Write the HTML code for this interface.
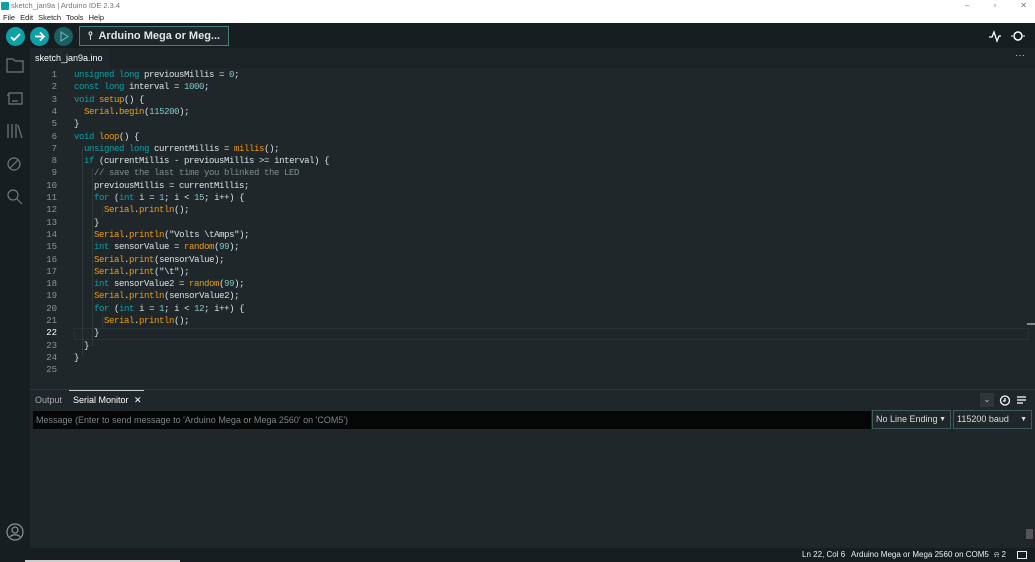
<!DOCTYPE html>
<html><head><meta charset="utf-8"><style>
*{margin:0;padding:0;box-sizing:border-box}
body{width:1035px;height:562px;overflow:hidden;background:#1f272a;font-family:"Liberation Sans",sans-serif;position:relative}
.abs{position:absolute}
.title{left:0;top:0;width:1035px;height:12px;background:#fff;font-size:7.5px;color:#777;line-height:12px;padding-left:11px}
.menu{left:0;top:12px;width:1035px;height:11px;background:#fff;font-size:7.5px;color:#222;line-height:11px;padding-left:3px;word-spacing:3px}
.tb{left:0;top:23px;width:1035px;height:25px;background:#171e21}
.side{left:0;top:48px;width:30px;height:500px;background:#171e21}
.btn{width:19px;height:19px;border-radius:50%;top:27px}
.code{left:30px;top:68px;font-family:"Liberation Mono",monospace;font-size:9px;letter-spacing:-0.4px;color:#dae3e3}
.ln{position:absolute;left:0;width:27px;text-align:right;color:#8a9596;letter-spacing:0}
.cl{position:absolute;left:44px;white-space:pre}
.k{color:#0ca1a6}.f{color:#f39c12}.n{color:#7fcbcd}.c{color:#7f8c8d}.s{color:#dae3e3}
.g{position:absolute;width:1px;background:#2f393c}
</style></head><body>
<div class="abs title"><span style="position:absolute;left:1px;top:2px;width:8px;height:8px;background:#0ca1a6;border-radius:1px"></span>sketch_jan9a | Arduino IDE 2.3.4</div>
<div class="abs" style="right:0;top:0;font-size:8px;color:#777;line-height:12px;width:70px;display:flex;justify-content:space-between;padding-right:8px"><span>–</span><span>▫</span><span>✕</span></div>
<div class="abs menu">File Edit Sketch Tools Help</div>
<div class="abs tb"></div>
<div class="abs btn" style="left:6px;background:#0ca1a6"><svg width="19" height="19"><path d="M5 10l3 3 6-6" stroke="#fff" stroke-width="1.8" fill="none"/></svg></div>
<div class="abs btn" style="left:30px;background:#0ca1a6"><svg width="19" height="19"><path d="M5 9.5h9M10 5.5l4 4-4 4" stroke="#fff" stroke-width="1.8" fill="none"/></svg></div>
<div class="abs btn" style="left:54px;background:#1b5f62"><svg width="19" height="19"><path d="M7 5v9l7-4.5z" stroke="#6aa" stroke-width="1.2" fill="none"/></svg></div>
<div class="abs" style="left:79px;top:26px;width:150px;height:20px;border:1px solid #3f7d7f;background:#1f272a;color:#e0e6e6;font-weight:bold;font-size:11px;line-height:18px;padding-left:8px;white-space:nowrap;overflow:hidden">⫯&nbsp; Arduino Mega or Meg... <span style="font-size:8px;margin-left:3px">▼</span></div>
<svg class="abs" style="left:986px;top:28px" width="45" height="16"><path d="M3 9h3l2-5 3 9 2-5h2" stroke="#fff" stroke-width="1.3" fill="none"/><circle cx="32" cy="8" r="4" stroke="#fff" stroke-width="1.5" fill="none"/><path d="M25 8h2M37 8h2" stroke="#fff"/></svg>
<div class="abs side"></div>
<svg class="abs" style="left:5px;top:56px" width="20" height="150" stroke="#6e7a7c" fill="none" stroke-width="1.2"><path d="M2 3h6l2 2h8v11H2z"/><path d="M4 37h13v11H4zM2 39h2M7 45h6"/><path d="M3 68v14M7 68v14M11 68v14M13 69l4 13"/><circle cx="9" cy="108" r="6"/><path d="M5 112l8-8"/><circle cx="8" cy="139" r="5"/><path d="M12 143l5 5"/></svg>
<svg class="abs" style="left:5px;top:522px" width="20" height="20" stroke="#8a9596" fill="none" stroke-width="1.2"><circle cx="10" cy="10" r="8"/><circle cx="10" cy="8" r="3"/><path d="M5 15c2-3 8-3 10 0"/></svg>
<div class="abs" style="left:30px;top:48px;width:1005px;height:20px;background:#1b2326"></div>
<div class="abs" style="left:30px;top:48px;width:80px;height:20px;background:#1f272a;color:#fff;font-size:9px;line-height:20px;padding-left:5px">sketch_jan9a.ino</div>
<div class="abs" style="left:1015px;top:50px;color:#ccc;font-size:10px">···</div>
<div class="abs" style="left:74px;top:328px;width:955px;height:12px;border:1px solid #283134"></div>
<div class="abs code">
<div class="g" style="left:52px;top:80px;height:208px"></div>
<div class="g" style="left:62px;top:100px;height:178px"></div>
<div class="g" style="left:72px;top:137px;height:12px"></div>
<div class="g" style="left:72px;top:247px;height:12px"></div>
<div style="position:absolute;left:0;top:0">
<div class="ln" style="top:2px">1</div><div class="cl" style="top:2px"><span class="k">unsigned long</span> previousMillis = <span class="n">0</span>;</div>
<div class="ln" style="top:14.3px">2</div><div class="cl" style="top:14.3px"><span class="k">const long</span> interval = <span class="n">1000</span>;</div>
<div class="ln" style="top:26.6px">3</div><div class="cl" style="top:26.6px"><span class="k">void</span> <span class="f">setup</span>() {</div>
<div class="ln" style="top:38.9px">4</div><div class="cl" style="top:38.9px">  <span class="f">Serial</span>.<span class="f">begin</span>(<span class="n">115200</span>);</div>
<div class="ln" style="top:51.2px">5</div><div class="cl" style="top:51.2px">}</div>
<div class="ln" style="top:63.5px">6</div><div class="cl" style="top:63.5px"><span class="k">void</span> <span class="f">loop</span>() {</div>
<div class="ln" style="top:75.8px">7</div><div class="cl" style="top:75.8px">  <span class="k">unsigned long</span> currentMillis = <span class="f">millis</span>();</div>
<div class="ln" style="top:88.1px">8</div><div class="cl" style="top:88.1px">  <span class="k">if</span> (currentMillis - previousMillis &gt;= interval) {</div>
<div class="ln" style="top:100.4px">9</div><div class="cl" style="top:100.4px">    <span class="c">// save the last time you blinked the LED</span></div>
<div class="ln" style="top:112.7px">10</div><div class="cl" style="top:112.7px">    previousMillis = currentMillis;</div>
<div class="ln" style="top:125px">11</div><div class="cl" style="top:125px">    <span class="k">for</span> (<span class="k">int</span> i = <span class="n">1</span>; i &lt; <span class="n">15</span>; i++) {</div>
<div class="ln" style="top:137.3px">12</div><div class="cl" style="top:137.3px">      <span class="f">Serial</span>.<span class="f">println</span>();</div>
<div class="ln" style="top:149.6px">13</div><div class="cl" style="top:149.6px">    }</div>
<div class="ln" style="top:161.9px">14</div><div class="cl" style="top:161.9px">    <span class="f">Serial</span>.<span class="f">println</span>(<span class="s">"Volts \tAmps"</span>);</div>
<div class="ln" style="top:174.2px">15</div><div class="cl" style="top:174.2px">    <span class="k">int</span> sensorValue = <span class="f">random</span>(<span class="n">99</span>);</div>
<div class="ln" style="top:186.5px">16</div><div class="cl" style="top:186.5px">    <span class="f">Serial</span>.<span class="f">print</span>(sensorValue);</div>
<div class="ln" style="top:198.8px">17</div><div class="cl" style="top:198.8px">    <span class="f">Serial</span>.<span class="f">print</span>(<span class="s">"\t"</span>);</div>
<div class="ln" style="top:211.1px">18</div><div class="cl" style="top:211.1px">    <span class="k">int</span> sensorValue2 = <span class="f">random</span>(<span class="n">99</span>);</div>
<div class="ln" style="top:223.4px">19</div><div class="cl" style="top:223.4px">    <span class="f">Serial</span>.<span class="f">println</span>(sensorValue2);</div>
<div class="ln" style="top:235.7px">20</div><div class="cl" style="top:235.7px">    <span class="k">for</span> (<span class="k">int</span> i = <span class="n">1</span>; i &lt; <span class="n">12</span>; i++) {</div>
<div class="ln" style="top:248px">21</div><div class="cl" style="top:248px">      <span class="f">Serial</span>.<span class="f">println</span>();</div>
<div class="ln" style="top:260.3px;color:#fff">22</div><div class="cl" style="top:260.3px">    }</div>
<div class="ln" style="top:272.6px">23</div><div class="cl" style="top:272.6px">  }</div>
<div class="ln" style="top:284.9px">24</div><div class="cl" style="top:284.9px">}</div>
<div class="ln" style="top:297.2px">25</div>
</div></div>
<div class="abs" style="left:1027px;top:323px;width:8px;height:2px;background:#888"></div>
<div class="abs" style="left:30px;top:389px;width:1005px;height:1px;background:#2c3538"></div>
<div class="abs" style="left:69px;top:390px;width:75px;height:1px;background:#ccc"></div>
<div class="abs" style="left:35px;top:395px;font-size:9px;color:#aab;">Output</div>
<div class="abs" style="left:73px;top:395px;font-size:9px;color:#fff;">Serial Monitor <span style="margin-left:3px">✕</span></div>
<div class="abs" style="left:980px;top:393px;width:14px;height:14px;background:#2e3639;color:#ccc;font-size:8px;text-align:center;line-height:14px">⌄</div>
<svg class="abs" style="left:998px;top:394px" width="32" height="13" fill="none" stroke="#fff" stroke-width="1.3"><circle cx="7" cy="6.5" r="4.5"/><path d="M7 4v3h-2"/><path d="M19 3h9M19 6h9M19 9h6"/></svg>
<div class="abs" style="left:33px;top:411px;width:838px;height:18px;background:#050707;color:#7a8485;font-size:9px;line-height:18px;padding-left:3px">Message (Enter to send message to 'Arduino Mega or Mega 2560' on 'COM5')</div>
<div class="abs" style="left:872px;top:410px;width:79px;height:19px;border:1px solid #3f5a5c;color:#ddd;font-size:9px;line-height:17px;padding-left:3px">No Line Ending <span style="float:right;margin-right:4px;font-size:7px">▼</span></div>
<div class="abs" style="left:953px;top:410px;width:79px;height:19px;border:1px solid #3f5a5c;color:#ddd;font-size:9px;line-height:17px;padding-left:3px">115200 baud <span style="float:right;margin-right:4px;font-size:7px">▼</span></div>
<div class="abs" style="left:1026px;top:529px;width:7px;height:10px;background:#555"></div>
<div class="abs" style="left:0;top:548px;width:1035px;height:14px;background:#171e21;color:#eee;font-size:8px;line-height:13px">
<span style="position:absolute;left:802px">Ln 22, Col 6</span><span style="position:absolute;left:851px">Arduino Mega or Mega 2560 on COM5</span><span style="position:absolute;left:994px">⍾ 2</span><span style="position:absolute;left:1017px;top:3px;width:10px;height:8px;border:1px solid #eee"></span></div>
<div class="abs" style="left:25px;top:560px;width:155px;height:2px;background:#ccc"></div>
</body></html>
